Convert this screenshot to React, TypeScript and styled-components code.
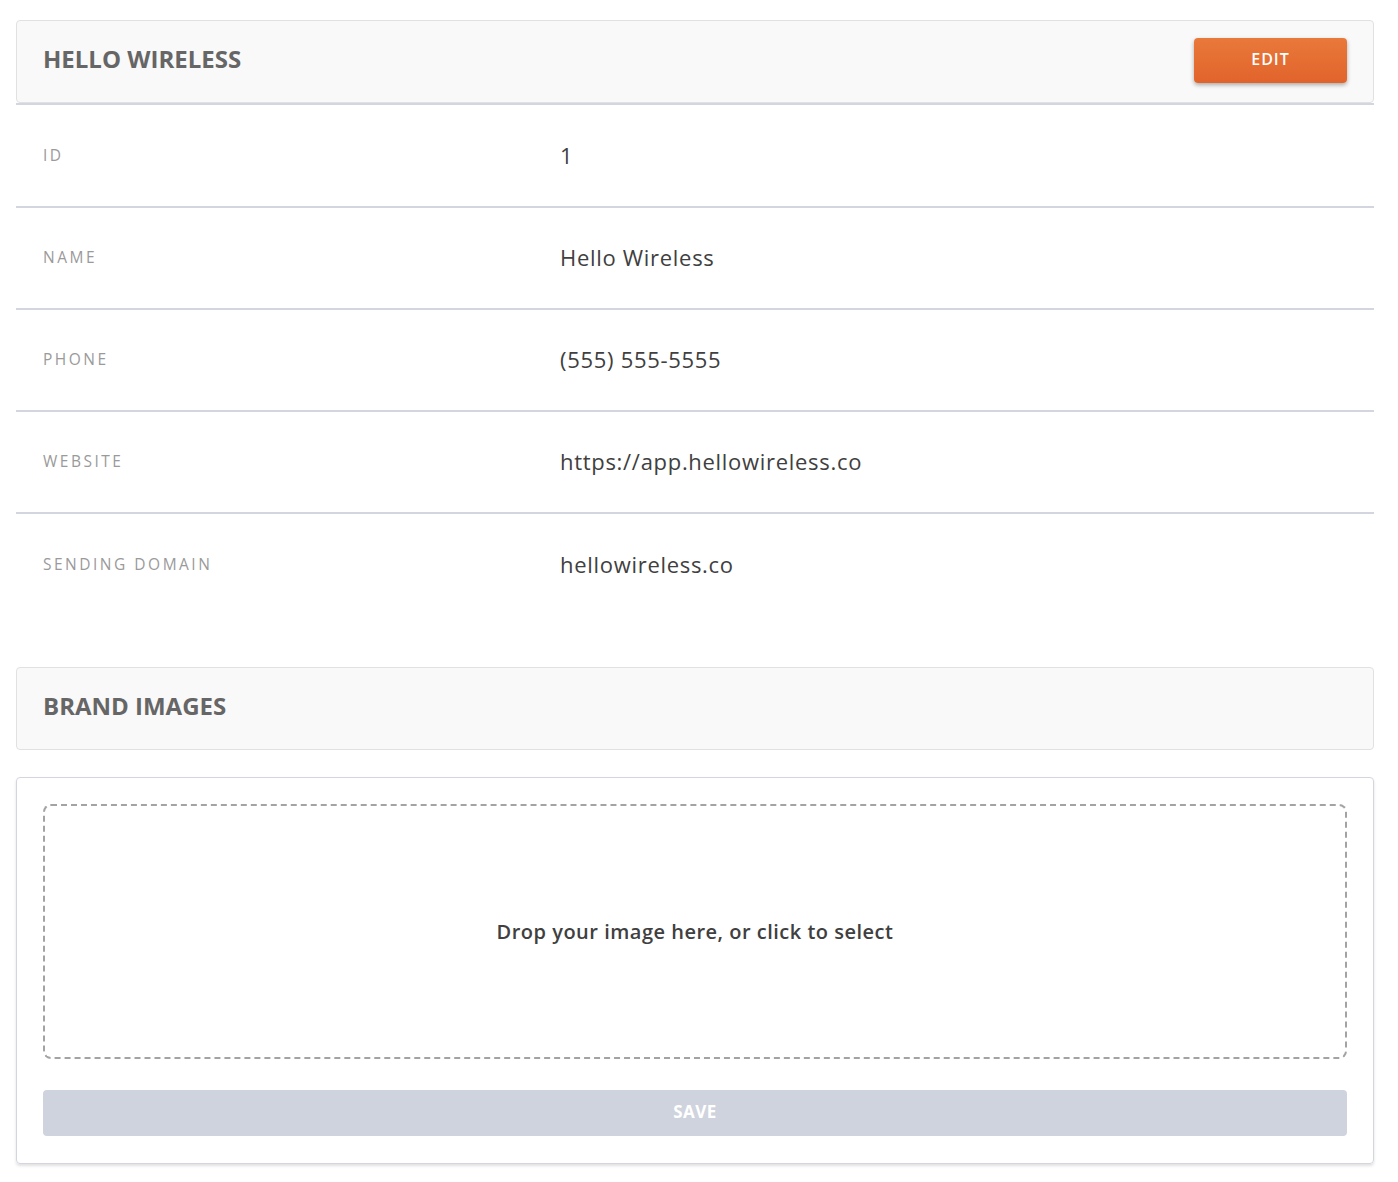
import styled, { createGlobalStyle } from 'styled-components';

const GlobalStyle = createGlobalStyle`
  body {
    margin: 0;
    background: #ffffff;
    font-family: "Open Sans", "Noto Sans", sans-serif;
    color: #444;
  }
  * { box-sizing: border-box; }
`;

const Page = styled.div`
  padding: 20px 24px 18px 16px;
`;

const PanelHeader = styled.div`
  display: flex;
  align-items: center;
  justify-content: space-between;
  height: 83px;
  padding: 0 26px 2px 26px;
  background: #f9f9f9;
  border: 1px solid #e1e1e1;
  border-radius: 4px;
`;

const HeaderTitle = styled.h2`
  margin: 0 0 5px;
  font-size: 24px;
  font-weight: 700;
  color: #666;
`;

const EditButton = styled.button`
  width: 153px;
  height: 45px;
  padding: 0 0 3px;
  border: none;
  border-radius: 4px;
  background: linear-gradient(#e9793b, #e1632b);
  color: #fff;
  font-family: inherit;
  font-size: 16px;
  font-weight: 600;
  letter-spacing: 1px;
  box-shadow: 0 2px 4px rgba(0, 0, 0, 0.32);
  cursor: pointer;
`;

const DetailList = styled.div`
  padding-top: 1px;
  border-top: 2px solid #d3d6df;
`;

const DetailRow = styled.div`
  display: grid;
  grid-template-columns: 517px 1fr;
  align-items: center;
  height: 102px;
  padding: 0 27px 2px;
  border-bottom: 2px solid #d3d6df;

  &:last-child {
    border-bottom: none;
  }
`;

const Label = styled.span`
  font-size: 15.5px;
  color: #9a9a9a;
  letter-spacing: 2.5px;
  text-transform: uppercase;
`;

const Value = styled.span`
  font-size: 22px;
  letter-spacing: 0.7px;
  color: #404040;
`;

const Section = styled.div`
  margin-top: 51px;
`;

const UploadCard = styled.div`
  margin-top: 27px;
  padding: 26px 26px 27px;
  border: 1px solid #d3d6df;
  border-radius: 4px;
  box-shadow: 0 2px 3px rgba(0, 0, 0, 0.12);
  display: flex;
  flex-direction: column;
  gap: 31px;
`;

const DropZone = styled.div`
  height: 255px;
  display: flex;
  align-items: center;
  justify-content: center;
  border: 2px dashed #a3a3a3;
  border-radius: 8px;
  font-size: 20px;
  font-weight: 600;
  letter-spacing: 0.5px;
  color: #404040;
  cursor: pointer;
`;

const SaveButton = styled.button`
  height: 46px;
  padding: 0 0 4px;
  border: none;
  border-radius: 4px;
  background: #cfd3dd;
  color: #fff;
  font-family: inherit;
  font-size: 17px;
  font-weight: 700;
  letter-spacing: 0.5px;
`;

const details = [
  { label: 'ID', value: '1' },
  { label: 'Name', value: 'Hello Wireless' },
  { label: 'Phone', value: '(555) 555-5555' },
  { label: 'Website', value: 'https://app.hellowireless.co' },
  { label: 'Sending Domain', value: 'hellowireless.co' },
];

const App = () => (
  <>
    <GlobalStyle />
    <Page>
      <PanelHeader>
        <HeaderTitle>HELLO WIRELESS</HeaderTitle>
        <EditButton>EDIT</EditButton>
      </PanelHeader>
      <DetailList>
        {details.map(d => (
          <DetailRow key={d.label}>
            <Label>{d.label}</Label>
            <Value>{d.value}</Value>
          </DetailRow>
        ))}
      </DetailList>

      <Section>
        <PanelHeader>
          <HeaderTitle>BRAND IMAGES</HeaderTitle>
        </PanelHeader>
        <UploadCard>
          <DropZone>Drop your image here, or click to select</DropZone>
          <SaveButton disabled>SAVE</SaveButton>
        </UploadCard>
      </Section>
    </Page>
  </>
);

export default App;
